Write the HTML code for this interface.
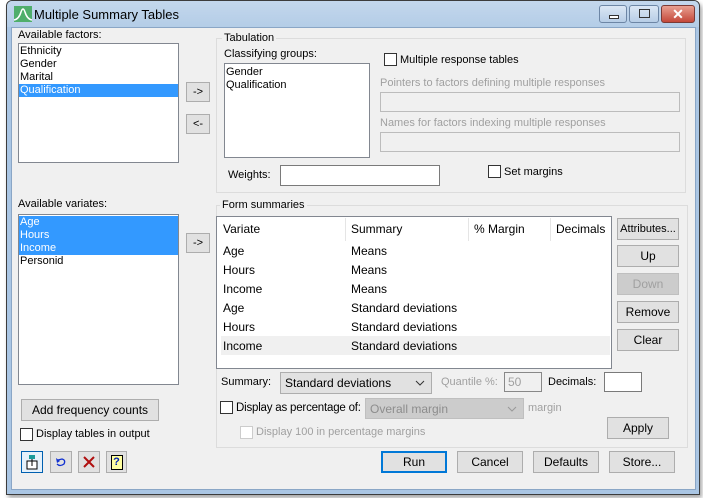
<!DOCTYPE html>
<html><head><meta charset="utf-8"><style>
*{box-sizing:border-box;margin:0;padding:0}
body{width:703px;height:498px;background:#fff;position:relative;overflow:hidden;font-family:"Liberation Sans",sans-serif;font-size:11px;color:#000}
.a{position:absolute}
.t{position:absolute;white-space:nowrap;line-height:13px}
.g{color:#a0a0a0}
.lb{position:absolute;background:#fff;border:1px solid #828790}
.in{position:absolute;background:#fff;border:1px solid #7a7a7a}
.dis{position:absolute;background:#f0f0f0;border:1px solid #bcbcbc}
.btn{position:absolute;background:#e1e1e1;border:1px solid #adadad;text-align:center;font-size:12px;display:flex;align-items:center;justify-content:center}
.cb{position:absolute;width:13px;height:13px;background:#fff;border:1px solid #333}
.grp{position:absolute;border:1px solid #dcdcdc}
.leg{position:absolute;background:#f0f0f0;padding:0 2px;line-height:13px}
.sel{background:#3399ff;color:#fff}
.lv{font-size:12px}
.chev{position:absolute;right:6px;top:7px}
</style></head><body>
<div class="a" style="left:6px;top:0;width:694px;height:495px;background:#aac6e4;border:1px solid #3c3c3c;border-radius:6px 6px 0 0;box-shadow:2px 3px 4px rgba(0,0,0,.35)"></div>
<div class="a" style="left:7px;top:1px;width:692px;height:26px;background:linear-gradient(#c3d7ec,#b4cde7);border-radius:5px 5px 0 0"></div>
<svg class="a" style="left:14px;top:6px" width="18" height="16"><rect width="18" height="16" fill="#4fae6b"/><path d="M0 14 Q5 13 7 6 Q9 0 11 6 Q13 13 18 14" fill="none" stroke="#fff" stroke-width="1.5"/></svg>
<div class="t" style="left:34px;top:8px;font-size:13px">Multiple Summary Tables</div>
<div class="a" style="left:599px;top:5px;width:28px;height:18px;border:1px solid #6d86a5;border-radius:3px;background:linear-gradient(#dbe7f4,#b7cde6)"><div class="a" style="left:9px;top:9px;width:10px;height:4px;border:1px solid #333;background:#fff"></div></div>
<div class="a" style="left:629px;top:5px;width:30px;height:18px;border:1px solid #6d86a5;border-radius:3px;background:linear-gradient(#dbe7f4,#b7cde6)"><div class="a" style="left:9px;top:3px;width:11px;height:9px;border:1px solid #333"></div></div>
<div class="a" style="left:661px;top:5px;width:34px;height:18px;border:1px solid #7b3a35;border-radius:3px;background:linear-gradient(#e8a091,#c4483a);color:#fff;font-weight:bold;font-size:14px;text-align:center;line-height:16px">✕</div>
<div class="a" style="left:11px;top:27px;width:685px;height:463px;background:#f0f0f0;border:1px solid #8aa6c6"></div>

<div class="t" style="left:18px;top:29px">Available factors:</div>
<div class="lb" style="left:18px;top:43px;width:161px;height:120px">
<div class="t" style="left:1px;top:1px">Ethnicity</div>
<div class="t" style="left:1px;top:14px">Gender</div>
<div class="t" style="left:1px;top:27px">Marital</div>
<div class="t sel" style="left:0;top:40px;width:159px;padding-left:1px">Qualification</div>
</div>
<div class="btn" style="left:186px;top:82px;width:24px;height:20px;font-size:11px">-&gt;</div>
<div class="btn" style="left:186px;top:114px;width:24px;height:20px;font-size:11px">&lt;-</div>

<div class="grp" style="left:216px;top:38px;width:470px;height:155px"></div>
<div class="leg" style="left:222px;top:32px">Tabulation</div>
<div class="t" style="left:224px;top:48px">Classifying groups:</div>
<div class="lb" style="left:224px;top:63px;width:146px;height:95px">
<div class="t" style="left:1px;top:2px">Gender</div>
<div class="t" style="left:1px;top:15px">Qualification</div>
</div>
<div class="cb" style="left:384px;top:53px"></div>
<div class="t" style="left:400px;top:54px">Multiple response tables</div>
<div class="t g" style="left:380px;top:77px">Pointers to factors defining multiple responses</div>
<div class="dis" style="left:380px;top:92px;width:300px;height:20px"></div>
<div class="t g" style="left:380px;top:117px">Names for factors indexing multiple responses</div>
<div class="dis" style="left:380px;top:132px;width:300px;height:20px"></div>
<div class="t" style="left:228px;top:169px">Weights:</div>
<div class="in" style="left:280px;top:165px;width:160px;height:21px"></div>
<div class="cb" style="left:488px;top:165px"></div>
<div class="t" style="left:504px;top:166px">Set margins</div>

<div class="t" style="left:18px;top:198px">Available variates:</div>
<div class="lb" style="left:18px;top:214px;width:161px;height:171px">
<div class="t sel" style="left:0;top:1px;width:159px;padding-left:1px">Age</div>
<div class="t sel" style="left:0;top:14px;width:159px;padding-left:1px">Hours</div>
<div class="t sel" style="left:0;top:27px;width:159px;padding-left:1px">Income</div>
<div class="t" style="left:1px;top:40px">Personid</div>
</div>
<div class="btn" style="left:186px;top:233px;width:24px;height:20px;font-size:11px">-&gt;</div>

<div class="grp" style="left:216px;top:205px;width:472px;height:243px"></div>
<div class="leg" style="left:220px;top:199px">Form summaries</div>
<div class="lb lv" style="left:216px;top:216px;width:396px;height:153px;border-color:#828790">
<div class="a" style="left:128px;top:1px;width:1px;height:23px;background:#e5e5e5"></div>
<div class="a" style="left:251px;top:1px;width:1px;height:23px;background:#e5e5e5"></div>
<div class="a" style="left:333px;top:1px;width:1px;height:23px;background:#e5e5e5"></div>
<div class="t" style="left:6px;top:6px">Variate</div><div class="t" style="left:134px;top:6px">Summary</div><div class="t" style="left:257px;top:6px">% Margin</div><div class="t" style="left:339px;top:6px">Decimals</div>
<div class="t" style="left:6px;top:28px">Age</div><div class="t" style="left:134px;top:28px">Means</div>
<div class="t" style="left:6px;top:47px">Hours</div><div class="t" style="left:134px;top:47px">Means</div>
<div class="t" style="left:6px;top:66px">Income</div><div class="t" style="left:134px;top:66px">Means</div>
<div class="t" style="left:6px;top:85px">Age</div><div class="t" style="left:134px;top:85px">Standard deviations</div>
<div class="t" style="left:6px;top:104px">Hours</div><div class="t" style="left:134px;top:104px">Standard deviations</div>
<div class="a" style="left:4px;top:119px;width:389px;height:19px;background:#f0f0f0"></div>
<div class="t" style="left:6px;top:123px">Income</div><div class="t" style="left:134px;top:123px">Standard deviations</div>
</div>
<div class="btn" style="left:617px;top:218px;width:62px;height:22px;font-size:11px">Attributes...</div>
<div class="btn" style="left:617px;top:245px;width:62px;height:22px">Up</div>
<div class="btn" style="left:617px;top:273px;width:62px;height:22px;color:#a0a0a0;background:#cccccc;border-color:#bfbfbf">Down</div>
<div class="btn" style="left:617px;top:301px;width:62px;height:22px">Remove</div>
<div class="btn" style="left:617px;top:329px;width:62px;height:22px">Clear</div>

<div class="t" style="left:221px;top:376px">Summary:</div>
<div class="btn" style="left:280px;top:372px;width:152px;height:22px;justify-content:flex-start;padding-left:4px">Standard deviations<svg class="chev" width="10" height="6"><path d="M1 1 L5 5 L9 1" fill="none" stroke="#333"/></svg></div>
<div class="t g" style="left:441px;top:376px">Quantile %:</div>
<div class="a" style="left:504px;top:372px;width:38px;height:20px;border:1px solid #888;background:#f0f0f0;color:#a0a0a0;padding:2px 3px;font-size:12px">50</div>
<div class="t" style="left:548px;top:376px">Decimals:</div>
<div class="in" style="left:604px;top:372px;width:38px;height:20px"></div>

<div class="cb" style="left:220px;top:401px"></div>
<div class="t" style="left:236px;top:402px;font-size:11.5px;letter-spacing:-0.2px">Display as percentage of:</div>
<div class="btn" style="left:365px;top:398px;width:159px;height:21px;background:#cccccc;border-color:#bfbfbf;color:#8d8d8d;justify-content:flex-start;padding-left:4px">Overall margin<svg class="chev" width="10" height="6"><path d="M1 1 L5 5 L9 1" fill="none" stroke="#999"/></svg></div>
<div class="t g" style="left:528px;top:402px">margin</div>
<div class="cb" style="left:240px;top:426px;border-color:#ccc"></div>
<div class="t g" style="left:256px;top:426px">Display 100 in percentage margins</div>
<div class="btn" style="left:607px;top:417px;width:62px;height:22px">Apply</div>

<div class="btn" style="left:21px;top:399px;width:138px;height:22px">Add frequency counts</div>
<div class="cb" style="left:20px;top:428px"></div>
<div class="t" style="left:36px;top:428px">Display tables in output</div>

<div class="btn" style="left:21px;top:451px;width:22px;height:22px;border:1px solid #0060b0;background:#e5f1fb"><svg width="16" height="16"><rect x="3" y="7" width="10" height="8" fill="#fff" stroke="#000"/><rect x="5" y="1" width="6" height="4" fill="#1a9a9a"/><line x1="8" y1="5" x2="8" y2="12" stroke="#000"/></svg></div>
<div class="btn" style="left:50px;top:451px;width:22px;height:22px"><svg width="14" height="12"><path d="M3 8 Q6 11 10 8 Q12 4 8 3 L4 4" fill="none" stroke="#1030d0" stroke-width="1.3"/><path d="M2 2 L3 7 L6 5Z" fill="#1030d0"/></svg></div>
<div class="btn" style="left:78px;top:451px;width:22px;height:22px"><svg width="12" height="12"><path d="M1 1 L11 11 M11 1 L1 11" stroke="#b01010" stroke-width="2"/></svg></div>
<div class="btn" style="left:106px;top:451px;width:21px;height:22px"><div style="width:12px;height:15px;background:#ffffa0;border:1px solid #000;font-size:11px;font-weight:bold;color:#0020b0;line-height:13px">?</div></div>

<div class="btn" style="left:381px;top:451px;width:66px;height:22px;border:2px solid #0078d7">Run</div>
<div class="btn" style="left:457px;top:451px;width:66px;height:22px">Cancel</div>
<div class="btn" style="left:533px;top:451px;width:66px;height:22px">Defaults</div>
<div class="btn" style="left:609px;top:451px;width:66px;height:22px">Store...</div>
</body></html>
